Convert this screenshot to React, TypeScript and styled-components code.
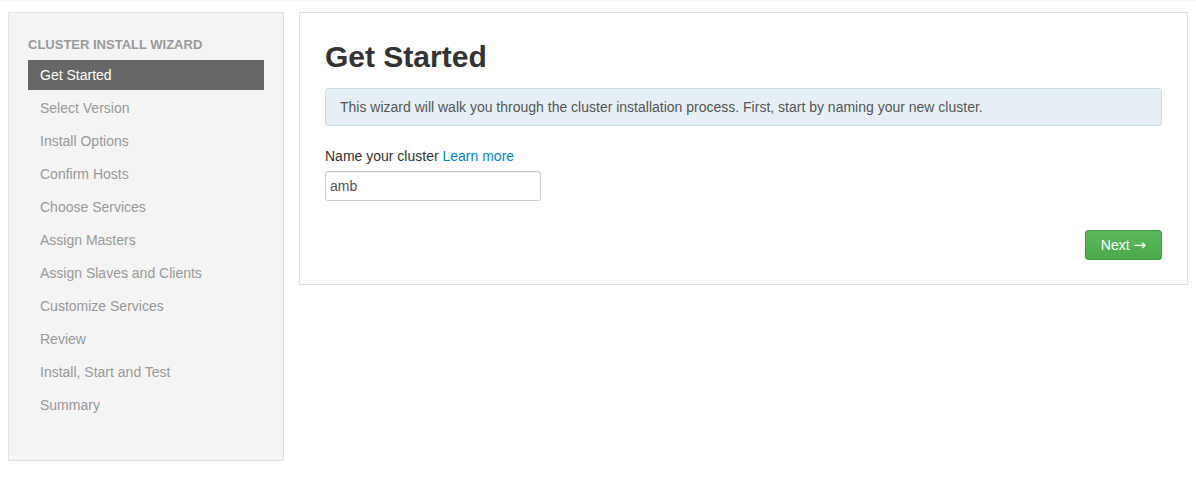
import styled, { createGlobalStyle } from 'styled-components'

const GlobalStyle = createGlobalStyle`
	body {
		margin: 0;
		font-family: 'Liberation Sans', Arial, sans-serif;
		font-size: 14px;
		color: #333;
		background: #fff;
	}
`

const Page = styled.div`
	display: flex;
	align-items: flex-start;
	gap: 15px;
	padding: 12px 8px 0 8px;
	box-shadow: inset 0 3px 3px -3px rgba(0, 0, 0, 0.08);
`

const Sidebar = styled.div`
	width: 276px;
	box-sizing: border-box;
	background: #f4f4f4;
	border: 1px solid #e1e1e1;
	padding: 21px 19px 40px;
`

const SideHeader = styled.div`
	font-size: 13px;
	font-weight: bold;
	color: #999;
	line-height: 20px;
	margin-top: 1px;
	margin-bottom: 5px;
`

const NavList = styled.ul`
	list-style: none;
	margin: 0;
	padding: 0;
	display: flex;
	flex-direction: column;
	gap: 3px;
`

const NavItem = styled.li<{ active?: boolean }>`
	height: 30px;
	line-height: 30px;
	padding: 0 12px;
	font-size: 14px;
	color: ${({ active }) => (active ? '#fff' : '#999')};
	background: ${({ active }) => (active ? '#666' : 'transparent')};
`

const Main = styled.div`
	flex: 1;
	box-sizing: border-box;
	border: 1px solid #e1e1e1;
	padding: 26px 25px 24px;
	background: #fff;
`

const Title = styled.h2`
	margin: 0 0 13px;
	font-size: 30px;
	font-weight: bold;
	line-height: 36px;
	color: #333;
`

const Alert = styled.div`
	background: #e5eff5;
	border: 1px solid #c9dde6;
	border-radius: 3px;
	padding: 0 14px;
	height: 36px;
	line-height: 36px;
	color: #555;
	font-size: 14px;
	margin-bottom: 20px;
`

const Label = styled.div`
	font-size: 14px;
	line-height: 20px;
	color: #333;
	margin-bottom: 5px;
	a {
		color: #0088cc;
		text-decoration: none;
	}
`

const Input = styled.input`
	box-sizing: border-box;
	width: 216px;
	height: 30px;
	border: 1px solid #ccc;
	border-radius: 3px;
	padding: 0 4px;
	font-family: 'Liberation Sans', Arial, sans-serif;
	font-size: 14px;
	color: #555;
	box-shadow: inset 0 1px 1px rgba(0, 0, 0, 0.075);
	outline: none;
`

const Footer = styled.div`
	display: flex;
	justify-content: flex-end;
	margin-top: 29px;
`

const NextButton = styled.button`
	width: 77px;
	height: 30px;
	border: 1px solid #429c42;
	border-radius: 3px;
	background: linear-gradient(#5cb85c, #4aa84a);
	color: #fff;
	font-family: 'Liberation Sans', Arial, sans-serif;
	font-size: 14px;
	padding: 0;
	cursor: pointer;
`

const Arrow = styled.span`
	font-family: 'DejaVu Sans', sans-serif;
	font-size: 15px;
`

const steps = [
	'Get Started',
	'Select Version',
	'Install Options',
	'Confirm Hosts',
	'Choose Services',
	'Assign Masters',
	'Assign Slaves and Clients',
	'Customize Services',
	'Review',
	'Install, Start and Test',
	'Summary',
]

const App = () => {
	return (
		<>
			<GlobalStyle />
			<Page>
				<Sidebar>
					<SideHeader>CLUSTER INSTALL WIZARD</SideHeader>
					<NavList>
						{steps.map((s, i) => (
							<NavItem key={s} active={i === 0}>
								{s}
							</NavItem>
						))}
					</NavList>
				</Sidebar>
				<Main>
					<Title>Get Started</Title>
					<Alert>
						This wizard will walk you through the cluster installation process.
						First, start by naming your new cluster.
					</Alert>
					<Label>
						Name your cluster <a href='#'>Learn more</a>
					</Label>
					<Input defaultValue='amb' />
					<Footer>
						<NextButton>
							Next <Arrow>→</Arrow>
						</NextButton>
					</Footer>
				</Main>
			</Page>
		</>
	)
}

export default App
